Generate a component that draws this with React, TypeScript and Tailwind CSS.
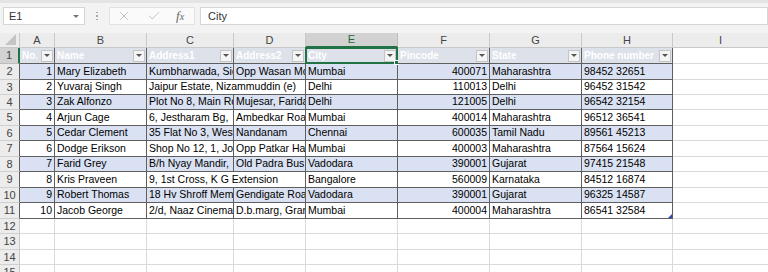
import { X, Check } from "lucide-react";

type Row = [number, string, string, string, string, number, string, string];

const rows: Row[] = [
  [1, "Mary Elizabeth", "Kumbharwada, Sidhpur", "Opp Wasan Motors", "Mumbai", 400071, "Maharashtra", "98452 32651"],
  [2, "Yuvaraj Singh", "Jaipur Estate, Nizammuddin (e)", "", "Delhi", 110013, "Delhi", "96452 31542"],
  [3, "Zak Alfonzo", "Plot No 8, Main Road", "Mujesar, Faridabad", "Delhi", 121005, "Delhi", "96542 32154"],
  [4, "Arjun Cage", "6, Jestharam Bg,", "Ambedkar Road", "Mumbai", 400014, "Maharashtra", "96512 36541"],
  [5, "Cedar Clement", "35 Flat No 3, West", "Nandanam", "Chennai", 600035, "Tamil Nadu", "89561 45213"],
  [6, "Dodge Erikson", "Shop No 12, 1, Jolly", "Opp Patkar Hall", "Mumbai", 400003, "Maharashtra", "87564 15624"],
  [7, "Farid Grey", "B/h Nyay Mandir,", "Old Padra Bus Stand", "Vadodara", 390001, "Gujarat", "97415 21548"],
  [8, "Kris Praveen", "9, 1st Cross, K G Extension", "", "Bangalore", 560009, "Karnataka", "84512 16874"],
  [9, "Robert Thomas", "18 Hv Shroff Memorial", "Gendigate Road", "Vadodara", 390001, "Gujarat", "96325 14587"],
  [10, "Jacob George", "2/d, Naaz Cinema", "D.b.marg, Grant Road", "Mumbai", 400004, "Maharashtra", "86541 32584"],
];

const heights = [
  "h-[16px]", "h-[16px]", "h-[15px]", "h-[15px]", "h-[16px]", "h-[15px]", "h-[16px]", "h-[15px]",
  "h-[16px]", "h-[15px]", "h-[16px]", "h-[15px]", "h-[16px]", "h-[15px]", "h-[16px]",
];

const W = ["w-[35px]", "w-[92px]", "w-[87px]", "w-[72px]", "w-[92px]", "w-[92px]", "w-[92px]", "w-[91px]"];
const letters = ["A", "B", "C", "D", "E", "F", "G", "H"];
const headers = ["No.", "Name", "Address1", "Address2", "City", "Pincode", "State", "Phone number"];

function FilterBtn() {
  return (
    <div className="ml-auto mr-[1px] flex h-[12px] w-[12px] shrink-0 items-center justify-center border border-[#c4c4c4] bg-[#f4f4f4]">
      <div className="h-0 w-0 border-x-[3px] border-t-[3px] border-x-transparent border-t-[#555]" />
    </div>
  );
}

function RowHead({ n, h, table, active }: { n: number; h: string; table?: boolean; active?: boolean }) {
  return (
    <div
      className={`flex w-[20px] shrink-0 items-center justify-center border-b border-r text-[11px] text-[#444] ${h} ${
        active ? "border-r-2 border-r-[#217346] bg-[#d2d2d2] border-b-[#bdbdbd]" : table ? "bg-[#ececec] border-b-[#d0d0d0] border-r-[#5f5f5f]" : "bg-[#ececec] border-b-[#d0d0d0] border-r-[#c8c8c8]"
      }`}
    >
      {n}
    </div>
  );
}

export default function App() {
  return (
    <div className="h-[272px] w-[768px] overflow-hidden bg-white text-[10.5px] text-black" style={{ fontFamily: "'Liberation Sans', Arial, sans-serif" }}>
      {/* formula bar */}
      <div className="flex h-[33px] items-start border-t-[3px] border-[#e4e4e4] bg-[#f3f3f3] pt-[4px]">
        <div className="ml-[3px] flex h-[18px] w-[82px] items-center border border-[#d6d6d6] bg-white pl-[5px] text-[11px] text-[#333]">
          E1
          <div className="ml-auto mr-[5px] h-0 w-0 border-x-[3px] border-t-[3px] border-x-transparent border-t-[#777]" />
        </div>
        <div className="flex h-[18px] w-[24px] flex-col items-center justify-center gap-[2px]">
          <div className="h-[1.5px] w-[1.5px] bg-[#aaa]" />
          <div className="h-[1.5px] w-[1.5px] bg-[#aaa]" />
          <div className="h-[1.5px] w-[1.5px] bg-[#aaa]" />
        </div>
        <div className="flex h-[18px] w-[86px] items-center border border-[#e2e2e2] bg-[#fafafa] text-[#a8a8a8]">
          <X size={14} strokeWidth={1.2} className="ml-[7px]" />
          <Check size={14} strokeWidth={1.2} className="ml-[16px]" />
          <span className="ml-[15px] text-[13px] italic text-[#666]" style={{ fontFamily: "'Liberation Serif', serif" }}>
            f<span className="text-[10px]">x</span>
          </span>
        </div>
        <div className="ml-[5px] flex h-[18px] flex-1 items-center border border-[#d6d6d6] bg-white pl-[7px] text-[11px] text-[#333]">
          City
        </div>
      </div>

      {/* column headers */}
      <div className="flex h-[15px] bg-[#ececec]">
        <div className="relative w-[20px] shrink-0 border-b border-r border-[#c8c8c8]">
          <div className="absolute bottom-[2px] right-[3px] h-0 w-0 border-b-[11px] border-l-[11px] border-b-[#c4c4c4] border-l-transparent" />
        </div>
        {letters.map((l, i) => (
          <div
            key={l}
            className={`flex shrink-0 items-center justify-center border-r text-[11px] ${W[i]} ${
              l === "E" ? "border-b-2 border-b-[#217346] border-r-[#bdbdbd] bg-[#d2d2d2] text-[#1e6b40]" : "border-b border-[#c8c8c8] text-[#444]"
            }`}
          >
            {l}
          </div>
        ))}
        <div className="flex flex-1 items-center justify-center border-b border-[#c8c8c8] text-[11px] text-[#444]">I</div>
      </div>

      {/* header row */}
      <div className={`flex ${heights[0]}`}>
        <RowHead n={1} h={heights[0]} active />
        {headers.map((t, i) => (
          <div
            key={t}
            className={`relative flex shrink-0 items-center whitespace-nowrap border-b border-r border-[#5f5f5f] bg-[#dde1ea] pl-[2px] text-[10px] font-bold text-white ${W[i]}`}
          >
            <span className="min-w-0 overflow-hidden">{t}</span>
            <FilterBtn />
            {i === 4 && (
              <div className="absolute inset-[-1px] border-2 border-[#217346]">
                <div className="absolute bottom-[-3px] right-[-3px] h-[5px] w-[5px] border border-white bg-[#217346]" />
              </div>
            )}
          </div>
        ))}
        <div className="flex-1 border-b border-[#dadada]" />
      </div>

      {/* data rows */}
      {rows.map((r, ri) => {
        const h = heights[ri + 1];
        const bg = ri % 2 === 0 ? "bg-[#d9e1f2]" : "bg-white";
        const cell = `flex shrink-0 items-center overflow-hidden whitespace-nowrap border-b border-r border-[#5f5f5f] ${bg}`;
        return (
          <div key={r[0]} className={`flex ${h}`}>
            <RowHead n={ri + 2} h={h} table />
            <div className={`${cell} ${W[0]} justify-end pr-[2px]`}>{r[0]}</div>
            <div className={`${cell} ${W[1]} pl-[2px]`}>{r[1]}</div>
            {r[3] === "" ? (
              <div className={`${cell} w-[159px] pl-[2px]`}>{r[2]}</div>
            ) : (
              <>
                <div className={`${cell} ${W[2]} pl-[2px]`}>{r[2]}</div>
                <div className={`${cell} ${W[3]} pl-[2px]`}>{r[3]}</div>
              </>
            )}
            <div className={`${cell} ${W[4]} pl-[2px]`}>{r[4]}</div>
            <div className={`${cell} ${W[5]} justify-end pr-[2px]`}>{r[5]}</div>
            <div className={`${cell} ${W[6]} pl-[2px]`}>{r[6]}</div>
            <div className={`${cell} ${W[7]} relative pl-[2px]`}>
              {r[7]}
              {ri === rows.length - 1 && (
                <div className="absolute bottom-0 right-0 h-0 w-0 border-b-[4px] border-l-[4px] border-b-[#2f4fa8] border-l-transparent" />
              )}
            </div>
            <div className="flex-1 border-b border-[#dadada]" />
          </div>
        );
      })}

      {/* empty rows */}
      {[12, 13, 14, 15].map((n) => {
        const h = heights[n - 1];
        return (
          <div key={n} className={`flex ${h}`}>
            <RowHead n={n} h={h} />
            {W.map((w, j) => (
              <div key={j} className={`shrink-0 border-b border-r border-[#dadada] ${w}`} />
            ))}
            <div className="flex-1 border-b border-[#dadada]" />
          </div>
        );
      })}
    </div>
  );
}
